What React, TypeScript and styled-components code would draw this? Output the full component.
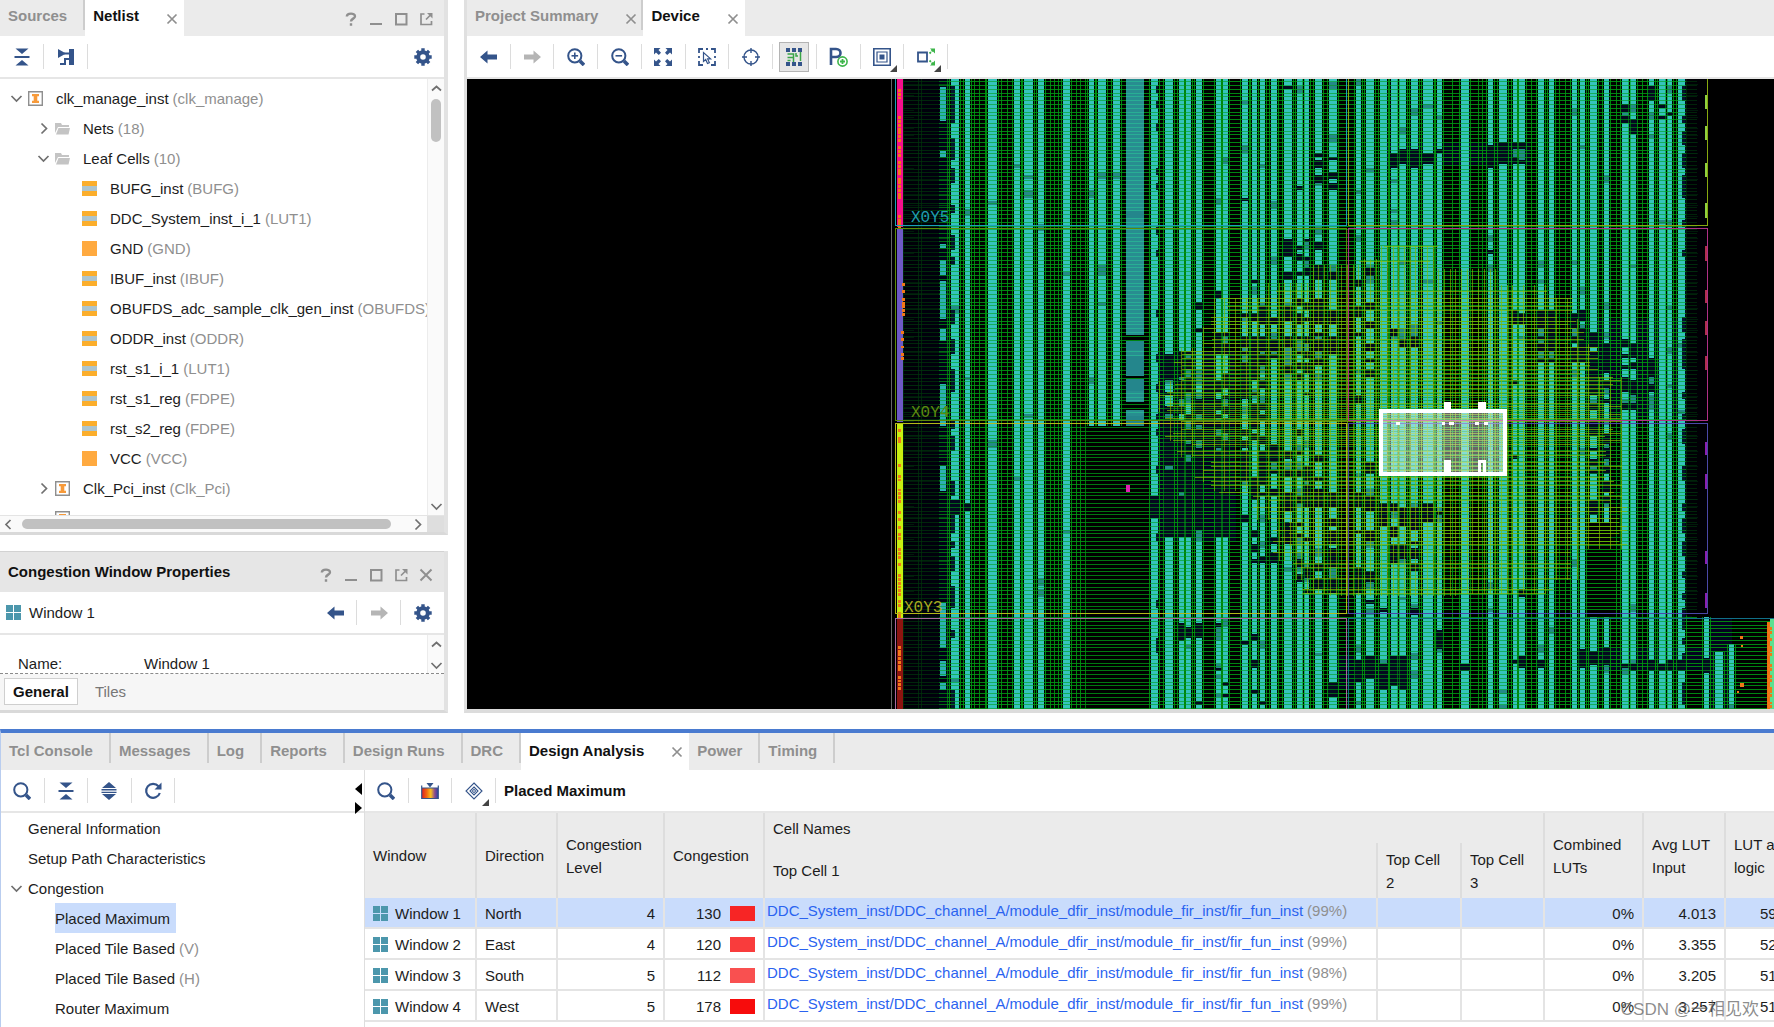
import React from "react";
import styled, { createGlobalStyle, css } from "styled-components";

const Global = createGlobalStyle`
  *, *::before, *::after { box-sizing: border-box; }
  html, body { margin: 0; background: #fff; }
  body {
    font-family: "Liberation Sans", Arial, "Noto Sans CJK SC", sans-serif;
    font-size: 15px;
    color: #1c1c1c;
    overflow: hidden;
  }
  button { font: inherit; color: inherit; border: 0; background: none; padding: 0; margin: 0; }
  ul { list-style: none; margin: 0; padding: 0; }
`;

const NAVY = "#34548a";
const GREY = "#8f8f8f";

/* ---------- layout ---------- */

const Page = styled.div`
  display: flex;
  flex-direction: column;
  height: 100vh;
  min-height: 700px;
`;
const TopArea = styled.div`
  flex: 1;
  min-height: 0;
  display: flex;
  gap: 16px;
  padding-bottom: 16px;
`;
const Side = styled.div`
  flex: 0 0 448px;
  min-width: 0;
  display: flex;
  flex-direction: column;
  gap: 16px;
`;
const Pane = styled.section<{ $grow?: boolean }>`
  ${(p) => (p.$grow ? "flex: 1;" : "")}
  min-height: 0;
  display: flex;
  flex-direction: column;
  border-right: 4px solid #e2e2e2;
  border-bottom: 3px solid #d9d9d9;
  background: #fff;
`;
const DevicePane = styled.section`
  flex: 1;
  min-width: 0;
  display: flex;
  flex-direction: column;
  border-left: 3px solid #e0e0e0;
  border-bottom: 4px solid #dcdcdc;
`;
const BottomPane = styled.section`
  flex: 0 0 298px;
  display: flex;
  flex-direction: column;
  border-top: 4px solid #4a7bd0;
  border-left: 1px solid #b9cdef;
`;
const TabButton = styled.button<{ $active?: boolean }>`
  height: 30px;
  font-weight: bold;
  color: ${(p) => (p.$active ? "#111" : GREY)};
  white-space: nowrap;
`;
const TabBar = styled.div<{ $tall?: boolean }>`
  flex: none;
  height: ${(p) => (p.$tall ? 37 : 36)}px;
  background: #ebebeb;
  display: flex;
  align-items: stretch;
  ${TabButton} { height: ${(p) => (p.$tall ? 34 : 30)}px; }
`;
const TabItem = styled.div<{ $active?: boolean; $sep?: boolean; $closable?: boolean }>`
  display: flex;
  align-items: flex-start;
  padding: 0 ${(p) => (p.$closable ? 6 : 18)}px 0 8px;
  background: ${(p) => (p.$active ? "#fff" : "transparent")};
  position: relative;
  ${(p) =>
    p.$sep &&
    css`
      &::after {
        content: "";
        position: absolute;
        right: 0;
        top: 0;
        width: 2px;
        height: 30px;
        background: #cdcdcd;
      }
    `}
`;
const CloseButton = styled.button`
  margin: 13px 0 0 27px;
  width: 12px;
  height: 12px;
  display: flex;
`;
const WindowControls = styled.div<{ $low?: boolean }>`
  margin-left: auto;
  padding: ${(p) => (p.$low ? 6 : 1)}px 11px 0 0;
  display: flex;
  align-items: center;
  gap: 11px;
`;
const ControlButton = styled.button`
  width: 14px;
  height: 14px;
  display: flex;
`;
const Toolbar = styled.div`
  flex: none;
  height: 43px;
  border-bottom: 2px solid #e6e6e6;
  display: flex;
  align-items: center;
`;
const ToolGroup = styled.div<{ $w: number }>`
  width: ${(p) => p.$w}px;
  display: flex;
  justify-content: center;
`;
const ToolCell = styled.div`
  flex: 1;
  height: 25px;
  display: flex;
  align-items: center;
  justify-content: center;
  border-right: 1px solid #dcdcdc;
`;
const ToolButton = styled.button<{ $on?: boolean }>`
  flex: none;
  width: 30px;
  height: 30px;
  display: flex;
  align-items: center;
  justify-content: center;
  border: ${(p) => (p.$on ? "1px solid #b4b4b4" : "0")};
  background: ${(p) => (p.$on ? "#e6e6e6" : "none")};
  position: relative;
`;
const Corner = styled.span`
  position: absolute;
  right: 0;
  bottom: 0;
  border-left: 7px solid transparent;
  border-bottom: 7px solid #444;
`;
const GearSlot = styled.div`
  margin-left: auto;
  padding-right: 6px;
`;

/* ---------- netlist tree ---------- */

const TreeArea = styled.div`
  flex: 1;
  min-height: 0;
  display: flex;
`;
const TreeScroll = styled.div`
  flex: 1;
  min-width: 0;
  overflow: hidden;
  padding-top: 4px;
`;
const TreeRow = styled.li<{ $level: number }>`
  height: 30px;
  display: flex;
  align-items: center;
  white-space: nowrap;
  padding-left: ${(p) => 8 + p.$level * 27}px;
`;
const Twist = styled.button`
  flex: none;
  width: 16px;
  height: 16px;
  display: flex;
  align-items: center;
  justify-content: center;
`;
const TwistGap = styled.span`
  flex: none;
  width: 16px;
`;
const NodeIcon = styled.span`
  flex: none;
  width: 15px;
  height: 15px;
  margin: 0 13px 0 4px;
  display: flex;
`;
const Dim = styled.span`
  color: ${GREY};
  margin-left: 4px;
`;
const VScroll = styled.div`
  flex: 0 0 17px;
  background: #fafafa;
  border-left: 1px solid #ececec;
  display: flex;
  flex-direction: column;
  align-items: center;
  padding: 3px 0;
`;
const VThumb = styled.div`
  width: 10px;
  height: 43px;
  border-radius: 5px;
  background: #c1c1c1;
  margin: 5px 0 auto;
`;
const HScroll = styled.div`
  flex: 0 0 17px;
  background: #fafafa;
  border-top: 1px solid #e4e4e4;
  display: flex;
  align-items: center;
`;
const HThumb = styled.div`
  flex: 1;
  height: 10px;
  border-radius: 5px;
  background: #c1c1c1;
  margin: 0 18px 0 6px;
`;
const HCorner = styled.div`
  width: 17px;
  height: 16px;
  background: #dedede;
  margin-left: 2px;
`;
const ArrowButton = styled.button`
  flex: none;
  width: 16px;
  height: 12px;
  display: flex;
  align-items: center;
  justify-content: center;
`;

/* ---------- properties ---------- */

const TitleBar = styled.header`
  height: 41px;
  flex: none;
  background: #e6e6e6;
  border-top: 1px solid #d2d2d2;
  display: flex;
  align-items: center;
`;
const Title = styled.h2`
  margin: 0;
  padding: 0 0 2px 8px;
  font-size: 15px;
  font-weight: bold;
  color: #111;
  white-space: nowrap;
`;
const Subject = styled.div`
  display: flex;
  align-items: center;
  gap: 8px;
  padding-left: 6px;
`;
const PushRight = styled.div`
  margin-left: auto;
`;
const PropBody = styled.div`
  height: 39px;
  flex: none;
  display: flex;
  overflow: hidden;
  border-bottom: 1px dashed #8a8a8a;
`;
const PropList = styled.dl`
  flex: 1;
  margin: 0;
  padding: 20px 0 0 18px;
  display: grid;
  grid-template-columns: 126px 1fr;
  line-height: 18px;
  dt, dd { margin: 0; }
`;
const PropScroll = styled(VScroll)`
  justify-content: space-between;
  padding: 3px 0 2px;
`;
const PropTabs = styled.div`
  height: 36px;
  flex: none;
  background: #f6f6f6;
  display: flex;
  padding: 4px 0 0 4px;
  gap: 8px;
`;
const PropTab = styled.button<{ $active?: boolean }>`
  height: 27px;
  padding: 0 8px;
  border: 1px solid ${(p) => (p.$active ? "#cfcfcf" : "transparent")};
  background: ${(p) => (p.$active ? "#fff" : "none")};
  font-weight: ${(p) => (p.$active ? "bold" : "normal")};
  color: ${(p) => (p.$active ? "#111" : "#777")};
`;

/* ---------- device ---------- */

const Canvas = styled.div`
  flex: 1;
  min-height: 0;
  background: #000;
  overflow: hidden;
  svg { display: block; width: 100%; height: 100%; }
`;

/* ---------- bottom ---------- */

const BottomBody = styled.div`
  flex: 1;
  min-height: 0;
  display: flex;
`;
const ReportNav = styled.nav`
  flex: 0 0 364px;
  border-right: 1px solid #dedede;
  overflow: hidden;
`;
const SplitArrows = styled.div`
  margin-left: auto;
  align-self: flex-start;
  padding: 13px 2px 0 0;
  display: flex;
  flex-direction: column;
  gap: 7px;
  svg { display: block; }
`;
const ReportRow = styled.li<{ $level: number }>`
  height: 30px;
  display: flex;
  align-items: center;
  padding-left: ${(p) => 7 + p.$level * 27}px;
`;
const ReportTwist = styled.span`
  width: 20px;
  display: flex;
  padding-left: 2px;
`;
const ReportButton = styled.button<{ $on?: boolean }>`
  height: 30px;
  padding-right: 6px;
  background: ${(p) => (p.$on ? "#c9dcfc" : "none")};
  white-space: nowrap;
`;
const ReportMain = styled.div`
  flex: 1;
  min-width: 0;
  overflow: hidden;
`;
const ReportTitle = styled.strong`
  padding-left: 8px;
  color: #111;
`;
const Grid = styled.table`
  table-layout: fixed;
  width: 1451px;
  min-width: 100%;
  border-collapse: separate;
  border-spacing: 0;
`;
const HeadRow = styled.tr<{ $h: number }>`
  height: ${(p) => p.$h}px;
`;
const Th = styled.th`
  background: #ebebeb;
  border-right: 2px solid #dddddd;
  font-weight: normal;
  text-align: left;
  vertical-align: middle;
  padding: 0 12px 0 8px;
  line-height: 23px;
`;
const Row = styled.tr<{ $on?: boolean }>`
  height: 31px;
  td { background: ${(p) => (p.$on ? "#c9dcfc" : "#fff")}; }
`;
const Td = styled.td<{ $num?: boolean }>`
  height: 31px;
  padding: 2px 8px 0;
  border-right: 2px solid #e4e4e4;
  border-bottom: 2px solid #e4e4e4;
  text-align: ${(p) => (p.$num ? "right" : "left")};
  white-space: nowrap;
  overflow: hidden;
`;
const LinkTd = styled(Td)`
  padding: 0 0 4px 2px;
`;
const LutTd = styled(Td)`
  padding-left: 34px;
`;
const CellLink = styled.a`
  color: #2a63f0;
  text-decoration: none;
`;
const WinName = styled.span`
  display: flex;
  align-items: center;
  gap: 7px;
`;
const Level = styled.span`
  display: flex;
  align-items: center;
  justify-content: flex-end;
  gap: 9px;
`;
const Swatch = styled.i<{ $c: string }>`
  width: 25px;
  height: 15px;
  background: ${(p) => p.$c};
`;
const Watermark = styled.div`
  position: absolute;
  right: 15px;
  bottom: 5px;
  font-size: 17px;
  line-height: 24px;
  color: rgba(90, 90, 90, 0.7);
`;

/* ---------- icons ---------- */

const I = ({ children, s = 18 }: { children: React.ReactNode; s?: number }) => (
  <svg width={s} height={s} viewBox={`0 0 ${s} ${s}`} fill="none" stroke={NAVY} strokeWidth="2">
    {children}
  </svg>
);
const Collapse = () => (
  <I>
    <path d="M2.500 .5h13L9 6z M2.500 17.500h13L9 12z" fill={NAVY} stroke="none" />
    <path d="M1.500 9h15" />
  </I>
);
const Expand = () => (
  <I>
    <path d="M2 6h14L9 0z M2 12h14L9 18z" fill={NAVY} stroke="none" />
    <path d="M1.500 7.800h15M1.500 10.400h15" strokeWidth="1.400" />
  </I>
);
const Hierarchy = () => (
  <I>
    <path d="M1 1v9l8-4.500z M12 1h5v16h-5z" fill={NAVY} stroke="none" />
    <path d="M7 5.500h6M3 16h5v-5h5" />
  </I>
);
const Gear = () => (
  <I>
    <circle cx="9" cy="9" r="4.800" strokeWidth="4" />
    <path
      d="M9 .3v3M9 14.700v3M.3 9h3M14.700 9h3M2.900 2.900l2 2M13.100 13.100l2 2M2.900 15.100l2-2M13.100 4.900l2-2"
      strokeWidth="3.400"
    />
  </I>
);
const Arrow = ({ right }: { right?: boolean }) => (
  <I>
    <path
      d={right ? "M18 9l-7.500-6.500v4H1v5h9.500v4z" : "M1 9l7.500-6.500v4H18v5H8.500v4z"}
      fill={right ? "#b5b5b5" : NAVY}
      stroke="none"
    />
  </I>
);
const Search = ({ mode }: { mode?: "in" | "out" }) => (
  <I>
    <circle cx="7.800" cy="7.800" r="6.600" />
    <path d="M13 13l4 4" strokeWidth="3.600" />
    {mode && <path d="M4.500 7.800h6.600" strokeWidth="1.600" />}
    {mode === "in" && <path d="M7.800 4.500v6.600" strokeWidth="1.600" />}
  </I>
);
const Fit = () => (
  <I>
    <path
      d="M0 0h6.500L4.500 2 7 4.800 4.800 7 2 4.500 0 6.500z M18 0v6.500l-2-2L13.200 7 11 4.800 13.500 2 11.500 0z M0 18v-6.500l2 2L4.800 11 7 13.200 4.500 16l2 2z M18 18h-6.500l2-2L11 13.200 13.200 11l2.800 2.500 2-2z"
      fill={NAVY}
      stroke="none"
    />
  </I>
);
const SelectArea = () => (
  <I>
    <path d="M1 5V1h4M8 1h2M13 1h4v4M1 13v4h4M13 17h4v-4M1 8v2M17 8v2" strokeWidth="1.800" />
    <path d="M5.500 4.500v9l2.200-2 1.800 4 1.900-.9-1.800-3.700h3z" strokeWidth="1.200" />
  </I>
);
const Target = () => (
  <I>
    <circle cx="9" cy="9" r="7" strokeWidth="1.400" />
    <path d="M9 0v5M9 13v5M0 9h5M13 9h5" strokeWidth="1.400" />
  </I>
);
const Routing = () => (
  <I>
    <path
      d="M1 0h4v4H1zM7 0h4v4H7zM13 0h4v4h-4zM1 14h4v4H1zM7 14h4v4H7zM13 14h4v4h-4z"
      fill={NAVY}
      stroke="none"
    />
    <path d="M2.500 6h6v3M2.500 9.500h6M2.500 12.500h3M8.500 9v5M11 5v3h2M15.500 4v9" stroke="#3aa548" strokeWidth="1.500" />
  </I>
);
const PlusP = () => (
  <I s={20}>
    <path d="M3 18V2h5c6 0 6 8 0 8H3" strokeWidth="2.600" />
    <circle cx="14.500" cy="14.500" r="4.600" stroke="#3db54a" strokeWidth="1.600" fill="#fff" />
    <path d="M14.500 12v5M12 14.500h5" stroke="#3db54a" strokeWidth="1.800" />
  </I>
);
const Squares = () => (
  <I>
    <path d="M.8 .8h16.400v16.400H.8z" strokeWidth="1.600" />
    <path d="M4 4h10v10H4z" strokeWidth="1.200" />
    <path d="M6.500 6.500h5v5h-5z" fill={NAVY} stroke="none" />
  </I>
);
const Spread = () => (
  <I>
    <path d="M1 4.500h9v9H1z" strokeWidth="1.800" />
    <path d="M12.500 5.500L16 2M12.500 12.500L16 16" stroke="#3db54a" strokeWidth="1.800" strokeDasharray="2 1" />
    <path d="M13 .5h5v5zM13 17.500h5v-5z" fill="#3db54a" stroke="none" />
  </I>
);
const Reload = () => (
  <I>
    <path d="M14.500 4.300A7 7 0 1 0 15.800 11" strokeWidth="2.200" />
    <path d="M17.500 .5v7h-7z" fill={NAVY} stroke="none" />
  </I>
);
const Heat = () => (
  <svg width="18" height="18" viewBox="0 0 18 18">
    <defs>
      <linearGradient id="heat">
        <stop offset="0" stopColor="#e02020" />
        <stop offset=".3" stopColor="#f06a10" />
        <stop offset=".55" stopColor="#f8c020" />
        <stop offset=".8" stopColor="#8a4a90" />
        <stop offset="1" stopColor="#3040a0" />
      </linearGradient>
    </defs>
    <path d="M1 6h16v10H1z" fill="url(#heat)" />
    <path d="M.7 3.500v13h16.600v-13M.7 6h16.600" fill="none" stroke={NAVY} strokeWidth="1.200" />
    <path d="M5.500 1h7L9 5.500z" fill={NAVY} />
  </svg>
);
const Diamond = () => (
  <I>
    <path d="M9 1l8 8-8 8-8-8z M9 5L13 9 9 13 5 9z" strokeWidth="1.100" />
    <circle cx="9" cy="9" r="1.400" strokeWidth="1" />
  </I>
);
const Chevron = ({ d }: { d: "up" | "down" | "left" | "right" }) => {
  const paths = {
    down: "M1.500 4l5 5 5-5",
    up: "M2 8.500l4.500-4 4.500 4",
    right: "M4.500 1.500l5 5-5 5",
    left: "M8.500 2l-4.500 4.500 4.500 4.500",
  };
  return (
    <svg width="13" height="13" viewBox="0 0 13 13" fill="none" stroke="#707070" strokeWidth="1.700">
      <path d={paths[d]} />
    </svg>
  );
};
const Cross = () => (
  <svg width="12" height="12" viewBox="0 0 12 12" stroke={GREY} strokeWidth="1.700">
    <path d="M1.500 1.500l9 9M10.500 1.500l-9 9" />
  </svg>
);
const Panes = () => (
  <svg width="15" height="15" viewBox="0 0 15 15" fill="#4c97ac">
    <path d="M0 0h7v7H0zM8 0h7v7H8zM0 8h7v7H0zM8 8h7v7H8z" />
  </svg>
);
const nodeIcons = {
  inst: (
    <svg width="15" height="15" viewBox="0 0 15 15">
      <path d="M.7 .7h13.600v13.600H.7z" fill="#fff" stroke="#8f8f8f" strokeWidth="1.400" />
      <path d="M4 3h7v2.200H9.300v4.600H11V12H4V9.800h1.700V5.200H4z" fill="#f79a3a" />
    </svg>
  ),
  folder: (
    <svg width="15" height="15" viewBox="0 0 15 15" fill="#c4c4c4">
      <path d="M0 2h6l1 2h7v2H3L0 12z" />
      <path d="M3.500 7H15l-1.500 6.500H1z" />
    </svg>
  ),
  cell: (
    <svg width="15" height="15" viewBox="0 0 15 15">
      <path d="M0 0h15v15H0z" fill="#fbae2c" />
      <path d="M0 5h15v5H0z" fill="#adc5cf" />
    </svg>
  ),
  solid: (
    <svg width="15" height="15" viewBox="0 0 15 15">
      <path d="M0 0h15v15H0z" fill="#ffaa40" />
    </svg>
  ),
};

/* ---------- shared pieces ---------- */

const Tool = ({ label, on, menu, children }: { label: string; on?: boolean; menu?: boolean; children: React.ReactNode }) => (
  <ToolButton aria-label={label} $on={on}>
    {children}
    {menu && <Corner />}
  </ToolButton>
);

const Controls = ({ closable }: { closable?: boolean }) => (
  <WindowControls $low={closable}>
    <ControlButton aria-label="Help">
      <svg width="14" height="14" viewBox="0 0 14 14" fill="none" stroke={GREY} strokeWidth="2.400">
        <path d="M2.800 4.500C3 .7 11 .7 11 4.200 11 6.800 7 6.500 7 9.600M7 11.300v2.400" />
      </svg>
    </ControlButton>
    <ControlButton aria-label="Minimize">
      <svg width="14" height="14" viewBox="0 0 14 14" stroke={GREY} strokeWidth="2">
        <path d="M1 12h12" />
      </svg>
    </ControlButton>
    <ControlButton aria-label="Maximize">
      <svg width="14" height="14" viewBox="0 0 14 14" fill="none" stroke={GREY} strokeWidth="2">
        <path d="M2 2h10.500v10.500H2z" />
      </svg>
    </ControlButton>
    <ControlButton aria-label="Float">
      <svg width="14" height="14" viewBox="0 0 14 14" fill="none" stroke={GREY} strokeWidth="1.700">
        <path d="M5.500 2H2v10.500h10.500V9M12.500 2L7 7.500" />
        <path d="M8 1h5.500v5.500z" fill={GREY} stroke="none" />
      </svg>
    </ControlButton>
    {closable && (
      <ControlButton aria-label="Close">
        <svg width="14" height="14" viewBox="0 0 14 14" stroke={GREY} strokeWidth="2">
          <path d="M1.500 1.500l11 11M12.500 1.500l-11 11" />
        </svg>
      </ControlButton>
    )}
  </WindowControls>
);

const Tab = ({ name, active, closable, sep }: { name: string; active?: boolean; closable?: boolean; sep?: boolean }) => (
  <TabItem $active={active} $closable={closable} $sep={sep}>
    <TabButton $active={active}>{name}</TabButton>
    {closable && (
      <CloseButton aria-label={`Close ${name}`}>
        <Cross />
      </CloseButton>
    )}
  </TabItem>
);

/* ---------- device drawing ---------- */

// Die geometry is kept in floorplan units and projected to whole screen pixels.
const px = (v: number) => Math.round(880 + v * 0.5702);
const py = (v: number) => Math.round(70 + v * 0.4144);

let seed = 7;
const rnd = () => {
  seed = (seed * 1103515245 + 12345) & 0x7fffffff;
  return seed / 0x7fffffff;
};

const TOP = 20;
const END = 1545;

// [left, right, top, bottom]
const columns: number[][] = [
  [125, 139], [149, 158], [190, 205], [235, 246], [253, 268], [277, 287], [321, 333],
  [367, 375, TOP, 860], [383, 396, TOP, 860], [408, 421, TOP, 860],
  [475, 488], [499, 513], [524, 533], [536, 545], [554, 565], [590, 598], [601, 610],
  [634, 645], [652, 662], [666, 676], [685, 697], [709, 722], [731, 741], [744, 753],
  [763, 776], [787, 801], [834, 844], [853, 866], [877, 889], [897, 909], [911, 922],
  [932, 944], [953, 970], [977, 986], [1019, 1033], [1066, 1075], [1086, 1100],
  [1110, 1118], [1121, 1131], [1154, 1164], [1173, 1182], [1214, 1222], [1227, 1236],
  [1245, 1258, TOP, 1092], [1269, 1279, TOP, 1092], [1245, 1258, 1320, END], [1269, 1279, 1320, END],
  [1302, 1313], [1316, 1325], [1349, 1358], [1367, 1378], [1380, 1389], [1399, 1412],
  [1445, 1453, 1320, END], [1465, 1478, 1405, END], [1489, 1498, 1385, END],
];

// Unplaced areas: [x0, y0, x1, y1, density]
const voids: number[][] = [
  [885, 178, 985, 200, 0.5], [885, 200, 970, 228, 0.9], [1066, 178, 1135, 228, 0.75],
  [710, 405, 770, 455, 0.4], [745, 465, 860, 515, 0.5], [760, 180, 800, 300, 0.25],
  [610, 590, 800, 612, 0.85], [575, 640, 810, 690, 0.75], [620, 690, 770, 745, 0.6],
  [650, 560, 860, 590, 0.3], [490, 680, 545, 760, 0.8], [499, 730, 565, 850, 0.6],
  [590, 740, 680, 1010, 0.55], [499, 850, 620, 1130, 0.88], [475, 1030, 490, 1080, 0.8],
  [685, 900, 745, 1000, 0.35], [745, 960, 790, 1020, 0.6], [650, 1015, 860, 1028, 0.9],
  [700, 1030, 860, 1062, 0.85], [860, 1050, 990, 1088, 0.8], [700, 1090, 800, 1230, 0.38],
  [650, 1140, 700, 1190, 0.55], [800, 1090, 950, 1130, 0.25], [900, 1150, 950, 1200, 0.5],
  [740, 1210, 870, 1265, 0.6], [820, 1265, 960, 1320, 0.15], [800, 1420, 935, 1470, 0.9],
  [880, 1470, 925, 1495, 0.9], [775, 1485, 801, 1510, 0.8], [970, 1350, 990, 1410, 0.8],
  [870, 620, 950, 665, 0.6], [834, 600, 870, 740, 0.25], [1110, 580, 1240, 605, 0.85],
  [1154, 600, 1240, 700, 0.65], [1240, 640, 1282, 720, 0.7], [1245, 720, 1282, 1090, 0.4],
  [1300, 650, 1330, 840, 0.35], [1345, 690, 1360, 820, 0.5], [1225, 1395, 1285, 1440, 0.9],
  [1300, 1425, 1455, 1452, 0.85], [1110, 1420, 1165, 1440, 0.7], [1345, 30, 1390, 130, 0.3],
  [1300, 80, 1330, 150, 0.4], [520, 1340, 575, 1370, 0.8], [590, 1330, 610, 1350, 0.6],
  [534, 1370, 680, 1540, 0.08], [125, 1040, 160, 1065, 0.9], [685, 1120, 760, 1160, 0.5],
];

const density = (x: number, y: number) => {
  let d = 0;
  for (const v of voids) if (x >= v[0] && x <= v[2] && y >= v[1] && y <= v[3]) d = Math.max(d, v[4]);
  if (d === 0 && x > 480 && x < 1300) {
    const e = ((x - 860) / 380) ** 2 + ((y - 820) / 430) ** 2;
    d = e < 1 && x < 860 ? 0.05 : 0.006;
  }
  return d;
};

const bar = (x0: number, y0: number, x1: number, y1: number) =>
  `M${px(x0)} ${py(y0)}H${px(x1)}V${py(y1)}H${px(x0)}z`;

const columnPath = columns.map(([a, b, t = TOP, e = END]) => bar(a, t, b, e)).join("");

let holePath = "";
let dimPath = "";
for (const [a, b, t = TOP, e = END] of columns) {
  for (let y = t; y < e; ) {
    const h = 9 + Math.floor(rnd() * 2) * 9;
    const d = density((a + b) / 2, y + h / 2);
    const r = rnd();
    if (r < d) holePath += bar(a - 2, y, b + 2, Math.min(y + h, e));
    else if (r < d + 0.02 + d * 0.3) dimPath += bar(a, y, b, Math.min(y + h, e));
    y += h;
  }
}
let edgePath = "";
for (let y = TOP; y < END; y += 18) {
  if (rnd() < 0.35) edgePath += bar(125, y, 131, y + 18);
  if (rnd() < 0.35) edgePath += bar(1407, y, 1412, y + 18);
  if (rnd() < 0.3) edgePath += bar(484, y, 488, y + 18);
}

let rowLines = "";
for (let y = 81, i = 0; y < 709; i++, y += i % 5 === 4 ? 3 : 4) rowLines += `M903 ${y}.500H${y > 618 ? 1774 : 1697}`;
let hairLines = "";
for (let i = 0; i < columns.length; i++) {
  const [a, b, t = TOP, e = END] = columns[i];
  hairLines += `M${px(b) + 1}.500 ${py(t)}V${py(e)}M${px(a) - 2}.500 ${py(t)}V${py(e)}`;
}
[41, 66, 72, 117, 165, 174, 184, 213, 222, 298, 305, 313, 343, 350, 359, 1004, 1048, 1056, 1142, 1190, 1201, 1290, 1337].forEach(
  (x) => (hairLines += `M${px(x)}.500 79V709`)
);
let sideTicks = "";
for (let y = 84; y < 612; y += 7 + Math.floor(rnd() * 3) * 4) sideTicks += `M1686 ${y}.500h12M904 ${y}.500h${rnd() < 0.5 ? 10 : 46}`;

const leftEdge = [
  [420, 870], [455, 840], [470, 755], [515, 680], [550, 580], [620, 555], [670, 515], [750, 490], [830, 500],
  [900, 520], [940, 553], [1000, 580], [1020, 655], [1090, 690], [1190, 725], [1235, 740], [1270, 780], [1275, 900],
];
const rightEdge = [
  [420, 978], [480, 1085], [520, 1170], [550, 1215], [600, 1235], [660, 1260], [740, 1300], [900, 1302],
  [1030, 1310], [1155, 1300], [1160, 1240], [1205, 1240], [1235, 1180], [1270, 1015], [1275, 900],
];
const stepAt = (tbl: number[][], y: number) => {
  let v = tbl[0][1];
  for (const [ty, tx] of tbl) if (y >= ty) v = tx;
  return v;
};
let congH = "";
for (let y = 425; y < 1272; y += 9) {
  if (rnd() < (y < 600 || y > 1150 ? 0.5 : 0.1)) continue;
  const l = stepAt(leftEdge, y) + Math.floor(rnd() * 3) * 14;
  const r = stepAt(rightEdge, y) - Math.floor(rnd() * 3) * 14;
  congH += `M${px(l)} ${py(y)}.500H${px(r)}`;
}
let congV = "";
for (let x = 490; x < 1305; x += x > 680 && x < 1100 ? 10 : 19) {
  let t = 0;
  let e = 0;
  for (let y = 425; y < 1272; y += 5) {
    if (x >= stepAt(leftEdge, y) && x <= stepAt(rightEdge, y)) {
      if (!t) t = y;
      e = y;
    }
  }
  if (t) congV += `M${px(x)}.500 ${py(t)}V${py(e)}`;
}

const ioBlocks = [[40, 122], [195, 210], [420, 430], [458, 495], [510, 600], [625, 655], [757, 858], [955, 1015], [1285, 1395], [1425, 1462], [1480, 1495]];
const ticks = (a: number, b: number, x = 31) => {
  let d = "";
  for (let y = a; y < b; y += 9) if (rnd() < 0.7) d += bar(x, y, x + 6, y + 7);
  return d;
};
const orangeTicks =
  ticks(28, 65) + ticks(112, 250) + ticks(260, 378) + ticks(395, 402, 38) + ticks(505, 595, 38) + ticks(620, 700, 36) +
  ticks(858, 910) + ticks(950, 990) + ticks(1010, 1330) + ticks(1390, 1500);

const Region = ({ x0, y0, x1, y1, c }: { x0: number; y0: number; x1: number; y1: number; c: string }) => (
  <path d={`M${px(x0)}.500 ${py(y0)}.500H${px(x1)}.500V${py(y1)}.500H${px(x0)}.500z`} fill="none" stroke={c} />
);

const DeviceView = () => (
  <svg
    viewBox="467 79 1307 630"
    preserveAspectRatio="xMaxYMin slice"
    role="img"
    aria-label="Device floorplan with congestion window"
    shapeRendering="crispEdges"
  >
    <path d="M467 79H1774V709H467z" fill="#000" />
    <path d="M891.500 79V709" stroke="#666" />
    <path d={`${bar(68, TOP, 123, END)}${bar(480, 680, 625, 1140)}${bar(1412, TOP, 1424, 1320)}${bar(1456, 1325, 1495, END)}${bar(885, 175, 1140, 230)}${bar(800, 1415, 935, 1495)}${bar(1225, 1395, 1460, 1450)}${bar(1240, 600, 1420, 840)}`} fill="#03031f" />
    <path d={rowLines} stroke="#005a08" />
    <path d={hairLines} stroke="#00600c" />
    <path d={bar(360, 860, 472, 1318)} fill="#000" opacity=".4" />
    <path d={bar(360, 1325, 472, END)} fill="#000" opacity=".3" />
    <path d={bar(1413, TOP, 1452, 1318)} fill="#000" opacity=".85" />
    <path d={bar(41, TOP, 120, END)} fill="#000010" opacity=".6" />
    <path d={sideTicks} stroke="#004a10" />
    <path d={columnPath} fill="#35c4bc" />
    <path d={ioBlocks.map(([a, b]) => bar(106, a, 115, b)).join("")} fill="#2eb0b4" />
    <path d={dimPath} fill="#248a88" />
    <path d={edgePath} fill="#04142c" />
    <path d={holePath} fill="#04091f" />
    <path d={rowLines} stroke="#00a018" opacity=".6" />
    <path d={bar(431, TOP, 463, 640) + bar(431, 655, 463, 738) + bar(431, 745, 463, 802) + bar(431, 820, 463, 860)} fill="#35bcc0" opacity=".75" />
    <path d={bar(431, 340, 463, 358) + bar(431, 655, 463, 675) + bar(431, 690, 463, 735) + bar(431, 745, 463, 775) + bar(431, 835, 463, 860)} fill="#24868c" />
    <path d={hairLines} stroke="#00a010" opacity=".55" />
    <path d={bar(41, TOP, 103, END) + bar(1414, TOP, 1450, 1316)} fill="#000008" opacity=".65" />
    <path d={congV} stroke="#86b800" opacity=".65" />
    <path d={congH} stroke="#86c000" opacity=".7" />

    <path d={bar(29, TOP, 40, 380)} fill="#f50f8c" />
    <path d={bar(29, 382, 40, 850)} fill="#6d59c4" />
    <path d={bar(29, 853, 40, 1322)} fill="#c8f010" />
    <path d={bar(29, 1325, 40, END)} fill="#8c1410" />
    <path d={orangeTicks} fill="#f07818" />
    <Region x0={27} y0={0} x1={818} y1={373} c="#1a9fb8" />
    <Region x0={821} y0={0} x1={1451} y1={373} c="#86a810" />
    <Region x0={27} y0={382} x1={818} y1={845} c="#5d8a08" />
    <Region x0={821} y0={382} x1={1451} y1={845} c="#b03088" />
    <Region x0={27} y0={853} x1={818} y1={1311} c="#b4b818" />
    <Region x0={821} y0={853} x1={1451} y1={1311} c="#4a48a8" />
    <Region x0={27} y0={1323} x1={818} y1={1700} c="#a868a0" />
    <Region x0={821} y0={1323} x1={1700} y1={1700} c="#107088" />
    <path d={bar(1447, 60, 1450, 95) + bar(1447, 135, 1450, 170) + bar(1447, 225, 1450, 258) + bar(1447, 322, 1450, 358)} fill="#8fd040" />
    <path d={bar(1447, 425, 1450, 460) + bar(1447, 530, 1450, 562) + bar(1447, 605, 1450, 640) + bar(1447, 690, 1450, 725)} fill="#b03050" />
    <path d={bar(1447, 898, 1450, 930) + bar(1447, 975, 1450, 1010) + bar(1447, 1160, 1450, 1192) + bar(1447, 1262, 1450, 1298)} fill="#8a20b0" />
    <path d={bar(432, 1002, 438, 1019)} fill="#e020b0" />
    <path d={bar(1556, 1332, 1561, END)} fill="#f07010" />
    <path d={bar(1561, 1325, 1568, END)} fill="#5ce090" />
    <path d={ticks(1335, END, 1558) + bar(1509, 1366, 1514, 1374) + bar(1510, 1387, 1514, 1392) + bar(1509, 1480, 1515, 1490) + bar(1503, 1498, 1507, 1504)} fill="#f07818" />

    <g fontFamily='"Liberation Mono", monospace' fontSize="16">
      <text x="911" y="222" fill="#1f9fb0">X0Y5</text>
      <text x="911" y="417" fill="#5d8a10">X0Y4</text>
      <text x="904" y="612" fill="#a8a820">X0Y3</text>
    </g>

    <path d="M1381 411H1505V474H1381z" fill="#fff" fillOpacity=".4" stroke="#fff" strokeWidth="4" />
    <path
      d="M1444 402h7v8h-7zM1478 402h8v8h-8zM1444 460h7v14h-7zM1478 460h3v14h-3zM1483 460h3v14h-3zM1478 460h8v3h-8zM1396 422h4v3h-4zM1442 422h3v3h-3zM1449 422h5v3h-5zM1475 422h4v3h-4zM1484 422h4v3h-4z"
      fill="#fff"
    />
  </svg>
);

/* ---------- data ---------- */

type Node = { level: number; icon: keyof typeof nodeIcons; name: string; kind: string; open?: boolean };
const nodes: Node[] = [
  { level: 0, icon: "inst", name: "clk_manage_inst", kind: "clk_manage", open: true },
  { level: 1, icon: "folder", name: "Nets", kind: "18", open: false },
  { level: 1, icon: "folder", name: "Leaf Cells", kind: "10", open: true },
  { level: 2, icon: "cell", name: "BUFG_inst", kind: "BUFG" },
  { level: 2, icon: "cell", name: "DDC_System_inst_i_1", kind: "LUT1" },
  { level: 2, icon: "solid", name: "GND", kind: "GND" },
  { level: 2, icon: "cell", name: "IBUF_inst", kind: "IBUF" },
  { level: 2, icon: "cell", name: "OBUFDS_adc_sample_clk_gen_inst", kind: "OBUFDS" },
  { level: 2, icon: "cell", name: "ODDR_inst", kind: "ODDR" },
  { level: 2, icon: "cell", name: "rst_s1_i_1", kind: "LUT1" },
  { level: 2, icon: "cell", name: "rst_s1_reg", kind: "FDPE" },
  { level: 2, icon: "cell", name: "rst_s2_reg", kind: "FDPE" },
  { level: 2, icon: "solid", name: "VCC", kind: "VCC" },
  { level: 1, icon: "inst", name: "Clk_Pci_inst", kind: "Clk_Pci", open: false },
];

const CELL = "DDC_System_inst/DDC_channel_A/module_dfir_inst/module_fir_inst/fir_fun_inst";
const rows = [
  { w: "Window 1", dir: "North", lvl: 4, cong: 130, c: "#f72525", pct: "99%", avg: "4.013", lut: "59" },
  { w: "Window 2", dir: "East", lvl: 4, cong: 120, c: "#f93c3c", pct: "99%", avg: "3.355", lut: "52" },
  { w: "Window 3", dir: "South", lvl: 5, cong: 112, c: "#f95050", pct: "98%", avg: "3.205", lut: "51" },
  { w: "Window 4", dir: "West", lvl: 5, cong: 178, c: "#f70c0c", pct: "99%", avg: "3.257", lut: "51" },
];
const colWidths = [112, 81, 107, 100, 613, 84, 83, 99, 82, 90];

/* ---------- app ---------- */

export default function App() {
  return (
    <Page>
      <Global />
      <TopArea>
        <Side>
          <Pane $grow>
            <TabBar>
              <Tab name="Sources" sep />
              <Tab name="Netlist" active closable />
              <Controls />
            </TabBar>
            <Toolbar>
              <ToolGroup $w={88}>
                <ToolCell><Tool label="Collapse all"><Collapse /></Tool></ToolCell>
                <ToolCell><Tool label="Show hierarchy"><Hierarchy /></Tool></ToolCell>
              </ToolGroup>
              <GearSlot><Tool label="Settings"><Gear /></Tool></GearSlot>
            </Toolbar>
            <TreeArea>
              <TreeScroll>
                <ul>
                  {nodes.map((n) => (
                    <TreeRow key={n.name} $level={n.level}>
                      {n.open === undefined ? (
                        <TwistGap />
                      ) : (
                        <Twist aria-label={`Toggle ${n.name}`} aria-expanded={n.open}>
                          <Chevron d={n.open ? "down" : "right"} />
                        </Twist>
                      )}
                      <NodeIcon>{nodeIcons[n.icon]}</NodeIcon>
                      {n.name}
                      <Dim>({n.kind})</Dim>
                    </TreeRow>
                  ))}
                  <TreeRow $level={1}>
                    <TwistGap />
                    <NodeIcon>{nodeIcons.inst}</NodeIcon>
                  </TreeRow>
                </ul>
              </TreeScroll>
              <VScroll>
                <ArrowButton aria-label="Scroll up"><Chevron d="up" /></ArrowButton>
                <VThumb />
                <ArrowButton aria-label="Scroll down"><Chevron d="down" /></ArrowButton>
              </VScroll>
            </TreeArea>
            <HScroll>
              <ArrowButton aria-label="Scroll left"><Chevron d="left" /></ArrowButton>
              <HThumb />
              <ArrowButton aria-label="Scroll right"><Chevron d="right" /></ArrowButton>
              <HCorner />
            </HScroll>
          </Pane>

          <Pane>
            <TitleBar>
              <Title>Congestion Window Properties</Title>
              <Controls closable />
            </TitleBar>
            <Toolbar>
              <Subject><Panes /> Window 1</Subject>
              <PushRight>
                <ToolGroup $w={88}>
                  <ToolCell><Tool label="Previous"><Arrow /></Tool></ToolCell>
                  <ToolCell><Tool label="Next"><Arrow right /></Tool></ToolCell>
                </ToolGroup>
              </PushRight>
              <ToolGroup $w={43}>
                <Tool label="Settings"><Gear /></Tool>
              </ToolGroup>
            </Toolbar>
            <PropBody>
              <PropList>
                <dt>Name:</dt>
                <dd>Window 1</dd>
              </PropList>
              <PropScroll>
                <ArrowButton aria-label="Scroll up"><Chevron d="up" /></ArrowButton>
                <ArrowButton aria-label="Scroll down"><Chevron d="down" /></ArrowButton>
              </PropScroll>
            </PropBody>
            <PropTabs>
              <PropTab $active>General</PropTab>
              <PropTab>Tiles</PropTab>
            </PropTabs>
          </Pane>
        </Side>

        <DevicePane>
          <TabBar>
            <Tab name="Project Summary" closable sep />
            <Tab name="Device" active closable />
          </TabBar>
          <Toolbar>
            <ToolGroup $w={481}>
              <ToolCell><Tool label="Back"><Arrow /></Tool></ToolCell>
              <ToolCell><Tool label="Forward"><Arrow right /></Tool></ToolCell>
              <ToolCell><Tool label="Zoom in"><Search mode="in" /></Tool></ToolCell>
              <ToolCell><Tool label="Zoom out"><Search mode="out" /></Tool></ToolCell>
              <ToolCell><Tool label="Zoom fit"><Fit /></Tool></ToolCell>
              <ToolCell><Tool label="Select area"><SelectArea /></Tool></ToolCell>
              <ToolCell><Tool label="Autofit selection"><Target /></Tool></ToolCell>
              <ToolCell><Tool label="Routing resources" on><Routing /></Tool></ToolCell>
              <ToolCell><Tool label="Draw Pblock"><PlusP /></Tool></ToolCell>
              <ToolCell><Tool label="Cell drag mode" menu><Squares /></Tool></ToolCell>
              <ToolCell><Tool label="Show connections" menu><Spread /></Tool></ToolCell>
            </ToolGroup>
          </Toolbar>
          <Canvas>
            <DeviceView />
          </Canvas>
        </DevicePane>
      </TopArea>

      <BottomPane>
        <TabBar $tall>
          <Tab name="Tcl Console" sep />
          <Tab name="Messages" sep />
          <Tab name="Log" sep />
          <Tab name="Reports" sep />
          <Tab name="Design Runs" sep />
          <Tab name="DRC" sep />
          <Tab name="Design Analysis" active closable />
          <Tab name="Power" sep />
          <Tab name="Timing" sep />
        </TabBar>
        <BottomBody>
          <ReportNav>
            <Toolbar>
              <ToolGroup $w={174}>
                <ToolCell><Tool label="Search"><Search /></Tool></ToolCell>
                <ToolCell><Tool label="Collapse all"><Collapse /></Tool></ToolCell>
                <ToolCell><Tool label="Expand all"><Expand /></Tool></ToolCell>
                <ToolCell><Tool label="Refresh"><Reload /></Tool></ToolCell>
              </ToolGroup>
              <SplitArrows>
                <svg width="7" height="12" viewBox="0 0 7 12"><path d="M7 0v12L0 6z" /></svg>
                <svg width="7" height="12" viewBox="0 0 7 12"><path d="M0 0v12l7-6z" /></svg>
              </SplitArrows>
            </Toolbar>
            <ul>
              <ReportRow $level={0}><ReportTwist /><ReportButton>General Information</ReportButton></ReportRow>
              <ReportRow $level={0}><ReportTwist /><ReportButton>Setup Path Characteristics</ReportButton></ReportRow>
              <ReportRow $level={0}>
                <ReportTwist><Chevron d="down" /></ReportTwist>
                <ReportButton aria-expanded>Congestion</ReportButton>
              </ReportRow>
              <ReportRow $level={1}><ReportTwist /><ReportButton $on>Placed Maximum</ReportButton></ReportRow>
              <ReportRow $level={1}><ReportTwist /><ReportButton>Placed Tile Based<Dim>(V)</Dim></ReportButton></ReportRow>
              <ReportRow $level={1}><ReportTwist /><ReportButton>Placed Tile Based<Dim>(H)</Dim></ReportButton></ReportRow>
              <ReportRow $level={1}><ReportTwist /><ReportButton>Router Maximum</ReportButton></ReportRow>
            </ul>
          </ReportNav>
          <ReportMain>
            <Toolbar>
              <ToolGroup $w={131}>
                <ToolCell><Tool label="Search"><Search /></Tool></ToolCell>
                <ToolCell><Tool label="Show metrics in device"><Heat /></Tool></ToolCell>
                <ToolCell><Tool label="Highlight" menu><Diamond /></Tool></ToolCell>
              </ToolGroup>
              <ReportTitle>Placed Maximum</ReportTitle>
            </Toolbar>
            <Grid>
              <colgroup>
                {colWidths.map((w, i) => <col key={i} style={{ width: w }} />)}
              </colgroup>
              <thead>
                <HeadRow $h={30}>
                  <Th rowSpan={2}>Window</Th>
                  <Th rowSpan={2}>Direction</Th>
                  <Th rowSpan={2}>Congestion Level</Th>
                  <Th rowSpan={2}>Congestion</Th>
                  <Th colSpan={3}>Cell Names</Th>
                  <Th rowSpan={2}>Combined LUTs</Th>
                  <Th rowSpan={2}>Avg LUT Input</Th>
                  <Th rowSpan={2}>LUT as logic</Th>
                </HeadRow>
                <HeadRow $h={55}>
                  <Th>Top Cell 1</Th>
                  <Th>Top Cell 2</Th>
                  <Th>Top Cell 3</Th>
                </HeadRow>
              </thead>
              <tbody>
                {rows.map((r, i) => (
                  <Row key={r.w} $on={i === 0}>
                    <Td><WinName><Panes />{r.w}</WinName></Td>
                    <Td>{r.dir}</Td>
                    <Td $num>{r.lvl}</Td>
                    <Td $num><Level>{r.cong}<Swatch $c={r.c} /></Level></Td>
                    <LinkTd><CellLink href="#cell">{CELL}</CellLink><Dim>({r.pct})</Dim></LinkTd>
                    <Td />
                    <Td />
                    <Td $num>0%</Td>
                    <Td $num>{r.avg}</Td>
                    <LutTd>{r.lut}</LutTd>
                  </Row>
                ))}
              </tbody>
            </Grid>
          </ReportMain>
        </BottomBody>
      </BottomPane>
      <Watermark>CSDN @一相见欢</Watermark>
    </Page>
  );
}
